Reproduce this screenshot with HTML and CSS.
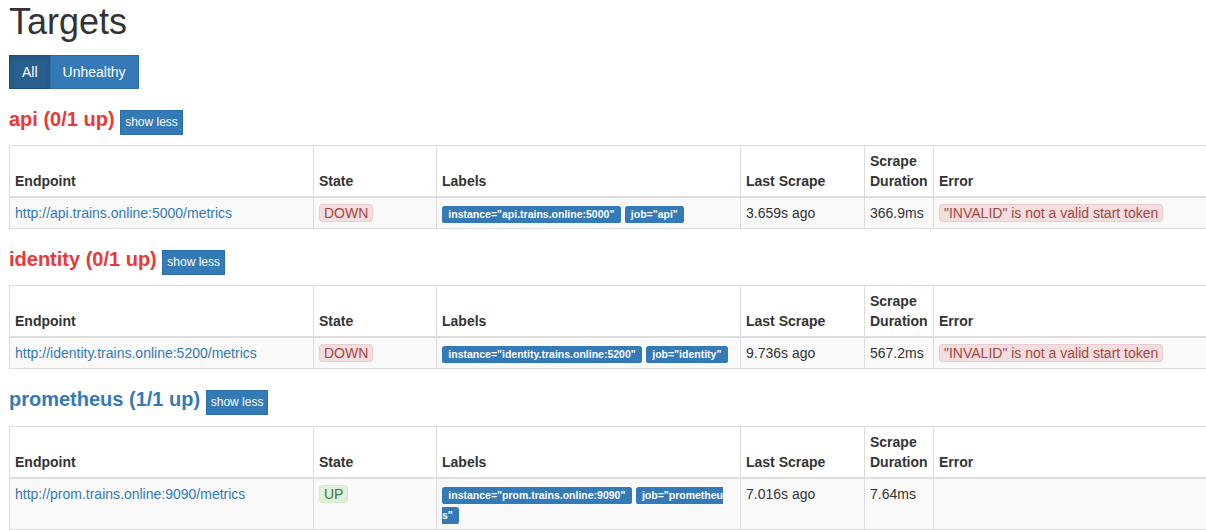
FILE: index.html
```html
<!DOCTYPE html>
<html lang="en">
<head>
<meta charset="utf-8">
<title>Targets</title>
<link rel="stylesheet" href="styles.css">
</head>
<body>
<div class="page">
  <h1 class="title">Targets</h1>
  <div class="btn-group">
    <button class="btn active">All</button>
    <button class="btn">Unhealthy</button>
  </div>

  <section class="job">
    <h2 class="job-title"><a class="job-link danger" href="#job-api">api (0/1 up)</a> <button class="toggle">show less</button></h2>
    <table class="targets">
      <colgroup>
        <col class="c-endpoint"><col class="c-state"><col class="c-labels"><col class="c-last"><col class="c-dur"><col class="c-error">
      </colgroup>
      <thead>
        <tr><th>Endpoint</th><th>State</th><th>Labels</th><th>Last Scrape</th><th>Scrape Duration</th><th>Error</th></tr>
      </thead>
      <tbody>
        <tr>
          <td><a href="#">http://api.trains.online:5000/metrics</a></td>
          <td><span class="state down">DOWN</span></td>
          <td><span class="label">instance="api.trains.online:5000"</span> <span class="label">job="api"</span></td>
          <td>3.659s ago</td>
          <td>366.9ms</td>
          <td><span class="state down">"INVALID" is not a valid start token</span></td>
        </tr>
      </tbody>
    </table>
  </section>

  <section class="job">
    <h2 class="job-title"><a class="job-link danger" href="#job-identity">identity (0/1 up)</a> <button class="toggle">show less</button></h2>
    <table class="targets">
      <colgroup>
        <col class="c-endpoint"><col class="c-state"><col class="c-labels"><col class="c-last"><col class="c-dur"><col class="c-error">
      </colgroup>
      <thead>
        <tr><th>Endpoint</th><th>State</th><th>Labels</th><th>Last Scrape</th><th>Scrape Duration</th><th>Error</th></tr>
      </thead>
      <tbody>
        <tr>
          <td><a href="#">http://identity.trains.online:5200/metrics</a></td>
          <td><span class="state down">DOWN</span></td>
          <td><span class="label">instance="identity.trains.online:5200"</span> <span class="label">job="identity"</span></td>
          <td>9.736s ago</td>
          <td>567.2ms</td>
          <td><span class="state down">"INVALID" is not a valid start token</span></td>
        </tr>
      </tbody>
    </table>
  </section>

  <section class="job">
    <h2 class="job-title"><a class="job-link normal" href="#job-prometheus">prometheus (1/1 up)</a> <button class="toggle">show less</button></h2>
    <table class="targets">
      <colgroup>
        <col class="c-endpoint"><col class="c-state"><col class="c-labels"><col class="c-last"><col class="c-dur"><col class="c-error">
      </colgroup>
      <thead>
        <tr><th>Endpoint</th><th>State</th><th>Labels</th><th>Last Scrape</th><th>Scrape Duration</th><th>Error</th></tr>
      </thead>
      <tbody>
        <tr>
          <td><a href="#">http://prom.trains.online:9090/metrics</a></td>
          <td><span class="state up">UP</span></td>
          <td><span class="label">instance="prom.trains.online:9090"</span> <span class="label">job="prometheus"</span></td>
          <td>7.016s ago</td>
          <td>7.64ms</td>
          <td></td>
        </tr>
      </tbody>
    </table>
  </section>
</div>
</body>
</html>
```
FILE: styles.css
```css
html, body {
  margin: 0;
  padding: 0;
  background: #fff;
}
body {
  font-family: "Liberation Sans", Arial, Helvetica, sans-serif;
  font-size: 14px;
  line-height: 20px;
  color: #333;
}
.page {
  padding: 2px 0 0 9px;
  overflow: hidden;
}
.title {
  margin: 0 0 13px 0;
  font-size: 36px;
  line-height: 40px;
  font-weight: 400;
  color: #333;
}
.btn-group {
  display: flex;
}
.btn {
  font-family: inherit;
  font-size: 14px;
  line-height: 20px;
  padding: 6px 12px;
  margin: 0;
  border: 1px solid #2e6da4;
  background: #337ab7;
  color: #fff;
  border-radius: 0;
  cursor: pointer;
}
.btn + .btn {
  margin-left: -1px;
}
.btn.active {
  background: #286090;
  border-color: #204d74;
  box-shadow: inset 0 3px 5px rgba(0, 0, 0, 0.125);
}
.job-title {
  margin: 19px 0 10px 0;
  font-size: 20px;
  line-height: 22px;
  font-weight: 700;
}
.job + .job .job-title {
  margin-top: 19px;
}
.job:last-child .job-title {
  margin-top: 19px;
  margin-bottom: 11px;
}
.job-link {
  text-decoration: none;
}
.job-link.danger {
  color: #eb3737;
}
.job-link.normal {
  color: #337ab7;
}
.toggle {
  font-family: inherit;
  font-size: 12px;
  line-height: 17px;
  font-weight: 400;
  padding: 3px 4px;
  margin: 0;
  border: 1px solid #2e6da4;
  background: #337ab7;
  color: #fff;
  border-radius: 0;
  vertical-align: baseline;
}
.targets {
  border-collapse: collapse;
  table-layout: fixed;
  width: 1216px;
  border: 1px solid #ddd;
}
.c-endpoint { width: 304px; }
.c-state { width: 123px; }
.c-labels { width: 304px; }
.c-last { width: 124px; }
.c-dur { width: 69px; }
.c-error { width: 292px; }
.targets th,
.targets td {
  padding: 5px;
  border: 1px solid #ddd;
  text-align: left;
  vertical-align: top;
  line-height: 20px;
}
.targets th {
  vertical-align: bottom;
  border-bottom: 2px solid #ddd;
  font-weight: 700;
}
.targets tbody tr {
  background: #f9f9f9;
}
.targets a {
  color: #337ab7;
  text-decoration: none;
}
.state {
  padding: 0 4px;
  border: 1px solid;
  border-radius: 4px;
}
.state.down {
  background: #f2dede;
  border-color: #ebccd1;
  color: #a94442;
}
.state.up {
  background: #dff0d8;
  border-color: #d6e9c6;
  color: #3c763d;
}
.label {
  display: inline;
  padding: 0.2em 0.6em 0.3em;
  font-size: 75%;
  font-weight: 700;
  line-height: 1;
  color: #fff;
  background: #337ab7;
  border-radius: 0.25em;
  white-space: normal;
  word-break: break-all;
}
```
